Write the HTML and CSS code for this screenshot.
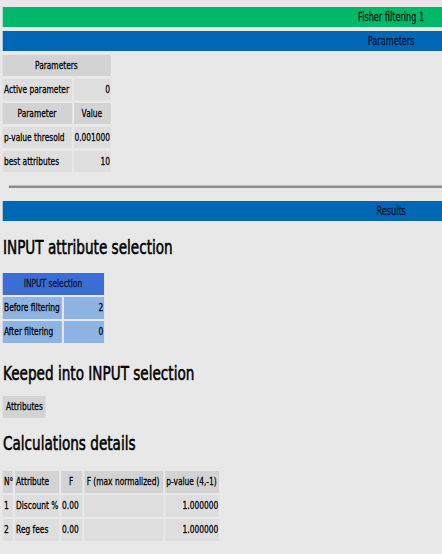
FILE: index.html
```html
<!DOCTYPE html>
<html>
<head>
<meta charset="utf-8">
<link rel="stylesheet" href="styles.css">
</head>
<body>
<div class="page">
  <div class="bar bar-green">Fisher filtering 1</div>
  <div class="bar bar-blue">Parameters</div>

  <div class="grid params">
    <div class="cell head span2">Parameters</div>
    <div class="cell">Active parameter</div><div class="cell num">0</div>
    <div class="cell head">Parameter</div><div class="cell head">Value</div>
    <div class="cell">p-value thresold</div><div class="cell num">0.001000</div>
    <div class="cell">best attributes</div><div class="cell num">10</div>
  </div>

  <hr class="sep">

  <div class="bar bar-blue bar-results">Results</div>

  <h2 class="title">INPUT attribute selection</h2>
  <div class="grid inputsel">
    <div class="cell bhead span2">INPUT selection</div>
    <div class="cell blue">Before filtering</div><div class="cell blue num">2</div>
    <div class="cell blue">After filtering</div><div class="cell blue num">0</div>
  </div>

  <h2 class="title t2">Keeped into INPUT selection</h2>
  <div class="cell head attr">Attributes</div>

  <h2 class="title t3">Calculations details</h2>
  <div class="grid calc">
    <div class="cell head left">N°</div>
    <div class="cell head left">Attribute</div>
    <div class="cell head">F</div>
    <div class="cell head">F (max normalized)</div>
    <div class="cell head">p-value (4,-1)</div>

    <div class="cell">1</div>
    <div class="cell">Discount %</div>
    <div class="cell">0.00</div>
    <div class="cell"></div>
    <div class="cell num">1.000000</div>

    <div class="cell">2</div>
    <div class="cell">Reg fees</div>
    <div class="cell">0.00</div>
    <div class="cell"></div>
    <div class="cell num">1.000000</div>
  </div>
</div>
</body>
</html>
```
FILE: styles.css
```css
html, body {
  margin: 0;
  padding: 0;
  background: #e8e8e8;
  overflow: hidden;
}

body {
  font-family: "DejaVu Sans", "Liberation Sans", sans-serif;
  font-size: 11px;
  color: #000;
}

/* The reference UI is rendered horizontally condensed; the whole page is
   laid out at full width and squeezed to 68% horizontally. */
.page {
  width: 650px;
  box-sizing: border-box;
  padding: 7px 0 0 4.4px;
  transform: scaleX(0.68);
  transform-origin: 0 0;
  -webkit-text-stroke: 0.3px currentColor;
}

.bar {
  height: 20px;
  line-height: 20px;
  text-align: center;
  font-size: 12px;
  margin-bottom: 4px;
  padding-left: 496px;
  box-sizing: border-box;
  white-space: nowrap;
}

.bar-green {
  background: #00b86a;
  color: #06140d;
}

.bar-blue {
  background: #0067b4;
  color: #04142e;
}

.grid {
  display: grid;
  column-gap: 3px;
}

.params {
  grid-template-columns: 101.5px 54px;
  grid-auto-rows: 21px;
  row-gap: 3px;
}

.cell {
  background: #dedede;
  line-height: 21px;
  padding: 0 3px 0 1.5px;
  white-space: nowrap;
  overflow: hidden;
}

.cell.head {
  background: #d3d3d3;
  text-align: center;
}

.cell.left {
  text-align: left;
}

.cell.num {
  text-align: right;
  padding: 0 1px 0 0;
}

.span2 {
  grid-column: span 2;
}

.sep {
  margin: 13px 0 0 8.8px;
  height: 0;
  border: 0;
  border-top: 1px solid #bdbdbd;
  border-bottom: 2px solid #8c8c8c;
}

.bar-results {
  margin-top: 13px;
  margin-bottom: 0;
}

.title {
  margin: 15px 0 0;
  font-size: 20px;
  line-height: 22px;
  font-weight: normal;
  color: #000;
  white-space: nowrap;
  -webkit-text-stroke: 0.6px currentColor;
}

.inputsel {
  margin-top: 15px;
  grid-template-columns: 86.8px 58.8px;
  grid-auto-rows: 22px;
  row-gap: 2px;
}

.inputsel .cell {
  line-height: 22px;
}

.cell.bhead {
  background: #3c6dd3;
  color: #0b1330;
  text-align: center;
}

.cell.blue {
  background: #8db4e2;
}

.t2 {
  margin-top: 19px;
}

.attr {
  margin-top: 12px;
  width: 63px;
  height: 22px;
  line-height: 22px;
  padding: 0;
  box-sizing: border-box;
}

.t3 {
  margin-top: 14px;
}

.calc {
  margin-top: 17px;
  grid-template-columns: 14.7px 64.7px 30.9px 116px 79.4px;
  grid-auto-rows: 22px;
  row-gap: 2px;
}

.calc .cell {
  line-height: 22px;
}
```
